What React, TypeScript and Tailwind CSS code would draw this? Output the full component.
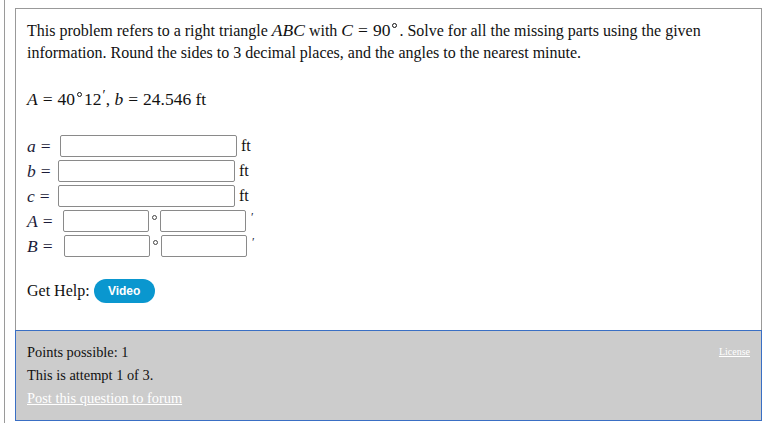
import React from 'react';

// inline math run, a touch larger like MathJax output
function M({ children }: { children: React.ReactNode }) {
  return <span className="text-[17.5px] leading-[20px]">{children}</span>;
}

function V({ children }: { children: React.ReactNode }) {
  return <i className="italic">{children}</i>;
}

function Eq() {
  return <span className="mx-[5px]">=</span>;
}

// MathJax style degree ring
function Deg() {
  return <span className="relative -top-[8px] mx-[2px] inline-block h-[5px] w-[5px] rounded-full border border-current" />;
}

function Prime() {
  return <span className="relative -top-[5px] ml-[1px] text-[14px]">′</span>;
}

function Box({ w }: { w: string }) {
  return <input className={`${w} h-[22px] rounded-[2px] border border-[#8a8a8a] bg-white px-1 outline-none`} />;
}

function DegRing() {
  return (
    <span className="flex h-full w-[11px] items-start justify-center pt-[5px]">
      <span className="h-[5px] w-[5px] rounded-full border border-[#444]" />
    </span>
  );
}

function Prm() {
  return <span className="ml-[5px] self-start text-[12px] leading-[14px]">′</span>;
}

export default function App() {
  return (
    <div className="h-[423px] w-[767px] overflow-hidden bg-white pl-[4px] font-['Liberation_Serif',serif] text-[16px] text-[#111]">
      <div className="flex h-full flex-col border-l border-[#9a9a9a] pl-[10px] pr-[5px] pt-[8px]">
        {/* question body */}
        <div className="h-[322px] border border-b-0 border-[#999] px-[11px] pt-[11px]">
          <p className="leading-[22px]">
            This problem refers to a right triangle{' '}
            <M>
              <V>ABC</V>
            </M>{' '}
            with{' '}
            <M>
              <V>C</V>
              <Eq />
              90
              <Deg />
            </M>
            . Solve for all the missing parts using the given information. Round the sides to 3 decimal places, and the
            angles to the nearest minute.
          </p>

          <p className="mt-[25px] leading-[22px]">
            <M>
              <V>A</V>
              <Eq />
              40
              <Deg />
              12
              <Prime />, <V>b</V>
              <Eq />
              24.546 ft
            </M>
          </p>

          <div className="mt-[24px] flex flex-col gap-[3px] text-[17.5px] text-[#1c1c3a]">
            <div className="flex h-[22px] items-center">
              <span className="w-[33px] shrink-0"><i>a</i><span className="ml-[5px]">=</span></span>
              <Box w="w-[177px]" />
              <span className="ml-[4px] text-[16px] text-[#111]">ft</span>
            </div>
            <div className="flex h-[22px] items-center">
              <span className="w-[31px] shrink-0"><i>b</i><span className="ml-[5px]">=</span></span>
              <Box w="w-[177px]" />
              <span className="ml-[4px] text-[16px] text-[#111]">ft</span>
            </div>
            <div className="flex h-[22px] items-center">
              <span className="w-[31px] shrink-0"><i>c</i><span className="ml-[5px]">=</span></span>
              <Box w="w-[177px]" />
              <span className="ml-[4px] text-[16px] text-[#111]">ft</span>
            </div>
            <div className="flex h-[22px] items-center">
              <span className="w-[36px] shrink-0"><i>A</i><span className="ml-[5px]">=</span></span>
              <Box w="w-[86px]" />
              <DegRing />
              <Box w="w-[86px]" />
              <Prm />
            </div>
            <div className="flex h-[22px] items-center">
              <span className="w-[37px] shrink-0"><i>B</i><span className="ml-[5px]">=</span></span>
              <Box w="w-[86px]" />
              <DegRing />
              <Box w="w-[86px]" />
              <Prm />
            </div>
          </div>

          <div className="mt-[22px] flex items-center">
            <span>Get Help:</span>
            <button className="ml-[4px] h-[24px] w-[61px] rounded-full bg-[#0a97cf] font-['Liberation_Sans',sans-serif] text-[12px] font-bold text-white">
              Video
            </button>
          </div>
        </div>

        {/* footer */}
        <div className="flex h-[91px] justify-between border border-[#3a6fc4] bg-[#cccccc] px-[11px] pt-[10px]">
          <div className="flex flex-col text-[14.4px] leading-[23px]">
            <span>Points possible: 1</span>
            <span>This is attempt 1 of 3.</span>
            <a className="text-white underline" href="#">
              Post this question to forum
            </a>
          </div>
          <a className="pt-[2px] text-[10px] leading-[18px] text-white underline" href="#">
            License
          </a>
        </div>
      </div>
    </div>
  );
}
